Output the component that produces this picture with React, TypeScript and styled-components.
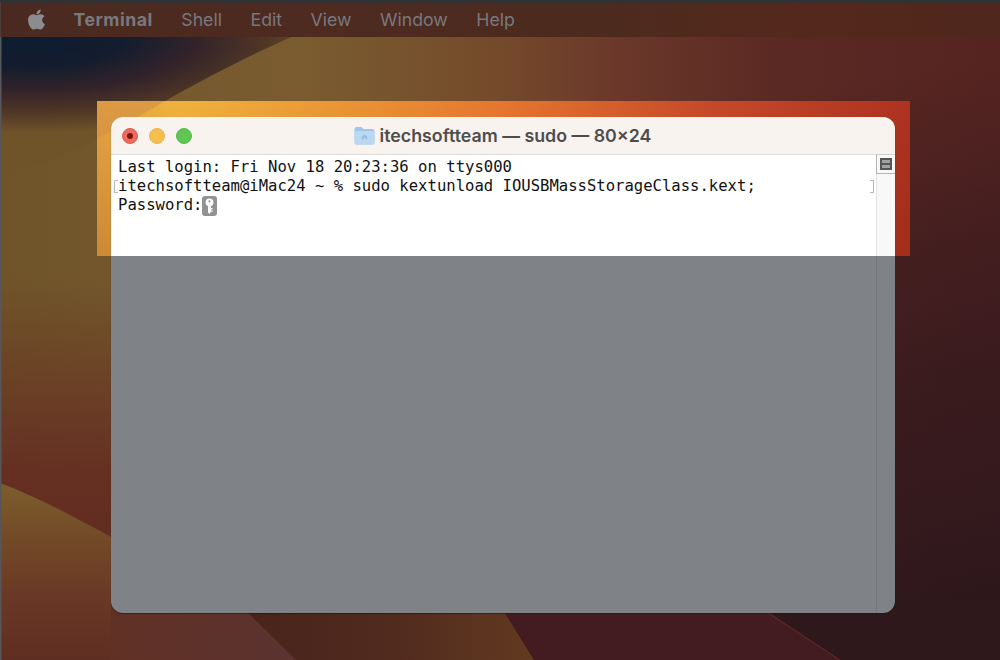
import React from "react";
import styled, { createGlobalStyle } from "styled-components";
import { FaApple } from "react-icons/fa";

const Global = createGlobalStyle`
  html, body { margin: 0; padding: 0; background: #2e1a1c; overflow: hidden; }
  * { box-sizing: border-box; }
`;

const Desktop = styled.div`
  position: relative;
  width: 1000px;
  height: 660px;
  overflow: hidden;
  display: flex;
  flex-direction: column;
  font-family: Inter, "Liberation Sans", sans-serif;
`;

const WallpaperSvg = styled.svg`
  position: absolute;
  inset: 0;
  display: block;
`;

const MenuBar = styled.header`
  position: relative;
  height: 37px;
  flex: none;
  display: flex;
  align-items: center;
  gap: 28.5px;
  padding-left: 27px;
  border-top: 3px solid #323133;
  border-left: 1px solid #4a3f3c;
  background: linear-gradient(90deg, #4a2a20 0%, #4e2a20 30%, #4d2a1e 60%, #55281c 80%, #4f271c 100%);
  color: #78797f;
  font-size: 17.7px;
  line-height: 1;
`;

const AppleMark = styled(FaApple)`
  width: 23px;
  height: 23px;
  color: #8b8c90;
  margin: -2px -3px 0 -3px;
`;

const MenuItem = styled.span<{ $strong?: boolean }>`
  font-weight: ${(p) => (p.$strong ? 700 : 400)};
  letter-spacing: ${(p) => (p.$strong ? "0.5px" : "0")};
`;

const Stage = styled.main`
  position: relative;
  flex: 1;
  padding: 80px 105px 47px 111px;
  display: flex;
`;

const TerminalWindow = styled.section`
  flex: 1;
  display: flex;
  flex-direction: column;
  border-radius: 12px;
  overflow: hidden;
  background: #7f8387;
  box-shadow: 0 1px 1px rgba(30, 20, 20, 0.55);
`;

const TitleBar = styled.div`
  height: 38px;
  flex: none;
  display: grid;
  grid-template-columns: 1fr auto 1fr;
  align-items: center;
  padding: 0 11px;
  background: #f8f3ef;
  border-bottom: 1px solid #dedbd8;
`;

const Lights = styled.div`
  display: flex;
  gap: 11px;
`;

const Light = styled.span<{ $color: string; $edge: string }>`
  width: 16px;
  height: 16px;
  border-radius: 50%;
  background: ${(p) => p.$color};
  border: 1px solid ${(p) => p.$edge};
  display: flex;
  align-items: center;
  justify-content: center;
`;

const CloseDot = styled.span`
  width: 6px;
  height: 6px;
  border-radius: 50%;
  background: #7c1610;
`;

const Title = styled.h1`
  margin: -1px 0 0 -1px;
  display: flex;
  align-items: center;
  gap: 5px;
  font-size: 17.8px;
  font-weight: 600;
  color: #4f4d4c;
  white-space: nowrap;
`;

const Body = styled.div`
  flex: 1;
  display: flex;
  min-height: 0;
`;

const Content = styled.div`
  flex: 1;
  min-width: 0;
`;

const Screen = styled.div`
  height: 101px;
  background: #fff;
  padding: 3px 2px 0 3px;
  font-family: "DejaVu Sans Mono", "Liberation Mono", monospace;
  font-size: 15.58px;
  line-height: 19px;
  color: #111;
`;

const Line = styled.div`
  display: flex;
  align-items: center;
  height: 19px;
  padding-left: 4px;
  white-space: pre;
`;

const MarkedLine = styled(Line)`
  padding-left: 0;
  justify-content: space-between;
`;

const Mark = styled.i<{ $side: "left" | "right" }>`
  display: block;
  width: 4px;
  height: 13px;
  flex: none;
  border: 1px solid #b9b9b9;
  border-${(p) => (p.$side === "left" ? "right" : "left")}: none;
`;

const MarkedText = styled.span`
  flex: 1;
`;

const Scroller = styled.aside`
  width: 19px;
  flex: none;
  display: flex;
  flex-direction: column;
`;

const ScrollerTrack = styled.div`
  height: 101px;
  flex: none;
  background: #f8f8f9;
  border-left: 1px solid #e4e4e4;
`;

const ScrollerRest = styled.div`
  flex: 1;
  border-left: 1px solid #74787c;
`;

const SplitButton = styled.div`
  height: 20px;
  margin: -1px 0 0 -1px;
  display: flex;
  align-items: center;
  justify-content: center;
  background: #f7f7f7;
  border: 1px solid #b5b5b5;
  border-top-color: #cfcfcf;
  border-right: none;
`;

const SplitGlyph = styled.span`
  width: 12px;
  height: 12px;
  background: linear-gradient(#555, #555) 0 3px / 100% 2px no-repeat, #a2a2a2;
  border: 2px solid #555;
`;

const KeyTile = styled.span`
  display: inline-flex;
  width: 15px;
  height: 20px;
  margin-top: 1px;
  border-radius: 3px;
  background: #929292;
  align-items: center;
  justify-content: center;
`;

const FolderIcon = () => (
  <svg width="21" height="19" viewBox="0 0 21 19" aria-hidden="true">
    <path d="M0.5 3 Q0.5 1 2.5 1 H7.5 L9.5 3 H18.5 Q20.5 3 20.5 5 V16.5 Q20.5 18.5 18.5 18.5 H2.5 Q0.5 18.5 0.5 16.5 Z" fill="#9ec6e8" />
    <path d="M0.5 5 H20.5 V16.5 Q20.5 18.5 18.5 18.5 H2.5 Q0.5 18.5 0.5 16.5 Z" fill="#b9d9f2" />
    <path d="M7.8 13.5 V10.8 L10.5 8.6 L13.2 10.8 V13.5 H11.4 V11.8 H9.6 V13.5 Z" fill="#97bfe0" />
  </svg>
);

const KeyIcon = () => (
  <svg width="9" height="17" viewBox="0 0 9 17" aria-hidden="true">
    <path
      fillRule="evenodd"
      d="M4.5 0.5 A4 4 0 0 1 6 8.2 V10 H7.6 V11.4 H6 V12.4 H7.6 V13.8 H6 L4.5 16 L3 14.6 V8.2 A4 4 0 0 1 4.5 0.5 Z M4.5 2.2 A1.1 1.1 0 1 0 4.5 4.4 A1.1 1.1 0 1 0 4.5 2.2 Z"
      fill="#fff"
    />
  </svg>
);

const Wallpaper = () => (
  <WallpaperSvg width="1000" height="660" viewBox="0 0 1000 660" aria-hidden="true">
    <defs>
      <linearGradient id="base" x1="0" x2="1" y1="0" y2="0">
        <stop offset="0" stopColor="#6f5429" />
        <stop offset="0.3" stopColor="#7a5c30" />
        <stop offset="0.5" stopColor="#744a2b" />
        <stop offset="0.62" stopColor="#6b372a" />
        <stop offset="0.78" stopColor="#5b2923" />
        <stop offset="1" stopColor="#552421" />
      </linearGradient>
      <linearGradient id="lowerRed" x1="0" x2="0" y1="0" y2="1">
        <stop offset="0.42" stopColor="#652f22" stopOpacity="0" />
        <stop offset="0.72" stopColor="#652f22" stopOpacity="1" />
        <stop offset="1" stopColor="#5c2a20" stopOpacity="1" />
      </linearGradient>
      <radialGradient id="plum" gradientUnits="userSpaceOnUse" cx="1000" cy="680" r="620">
        <stop offset="0" stopColor="#27141b" stopOpacity="0.97" />
        <stop offset="0.5" stopColor="#2c151c" stopOpacity="0.72" />
        <stop offset="1" stopColor="#2c151c" stopOpacity="0" />
      </radialGradient>
      <radialGradient id="navy" gradientUnits="userSpaceOnUse" cx="30" cy="37" r="300" gradientTransform="translate(0 25.2) scale(1 0.32)">
        <stop offset="0" stopColor="#0c1c30" />
        <stop offset="0.32" stopColor="#141d2e" />
        <stop offset="0.56" stopColor="#33232a" />
        <stop offset="0.78" stopColor="#4f3625" />
        <stop offset="1" stopColor="#6f5429" />
      </radialGradient>
      <linearGradient id="dune" x1="0" x2="0" y1="0" y2="1">
        <stop offset="0" stopColor="#7c5e2c" />
        <stop offset="0.3" stopColor="#734b28" />
        <stop offset="0.65" stopColor="#693826" />
        <stop offset="1" stopColor="#5f2e22" />
      </linearGradient>
      <linearGradient id="shoulder" x1="0" x2="1" y1="0" y2="0">
        <stop offset="0" stopColor="#603024" />
        <stop offset="1" stopColor="#5c3331" />
      </linearGradient>
      <linearGradient id="midBand" x1="0" x2="1" y1="0" y2="0">
        <stop offset="0" stopColor="#47231a" />
        <stop offset="0.55" stopColor="#522b1f" />
        <stop offset="1" stopColor="#623a20" />
      </linearGradient>
      <linearGradient id="spot" x1="0" x2="1" y1="0" y2="0">
        <stop offset="0" stopColor="#e2a442" />
        <stop offset="0.1" stopColor="#f0b23d" />
        <stop offset="0.3" stopColor="#ea9634" />
        <stop offset="0.5" stopColor="#e6762f" />
        <stop offset="0.75" stopColor="#c64a29" />
        <stop offset="1" stopColor="#ae3220" />
      </linearGradient>
      <linearGradient id="spotShade" x1="0" x2="0" y1="0" y2="1">
        <stop offset="0" stopColor="#6e1a08" stopOpacity="0" />
        <stop offset="1" stopColor="#6e1a08" stopOpacity="0.2" />
      </linearGradient>
    </defs>

    <rect width="1000" height="660" fill="url(#base)" />
    <rect width="1000" height="660" fill="url(#lowerRed)" />
    <rect width="1000" height="660" fill="url(#plum)" />
    <path d="M0 37 H291 C222 68 165 101 141 115 C100 140 60 160 0 175 Z" fill="url(#navy)" />

    <path d="M0 483 C40 498 80 520 111 537 V660 H0 Z" fill="url(#dune)" />
    <path d="M111 537 L111 660 H296 L235 600 Z" fill="url(#shoulder)" />

    <path d="M235 600 L296 660 H534 L497 600 Z" fill="url(#midBand)" />
    <path d="M497 600 L534 660 H840 L752 600 Z" fill="#431c21" />
    <path d="M752 600 L840 660 H1000 V600 Z" fill="#2e181c" />
    <path d="M768 613 L840 660" stroke="#672b2a" strokeWidth="1" fill="none" />

    <rect x="0" y="37" width="1.5" height="623" fill="#56565b" />

    <rect x="97" y="101" width="813" height="155" fill="url(#spot)" />
    <path d="M97 101 H165 L141 115 C125 124 110 132 97 138 Z" fill="#dd9a44" />
    <rect x="97" y="101" width="813" height="155" fill="url(#spotShade)" />
  </WallpaperSvg>
);

export default function App() {
  return (
    <Desktop>
      <Global />
      <Wallpaper />
      <MenuBar>
        <AppleMark />
        <MenuItem $strong>Terminal</MenuItem>
        <MenuItem>Shell</MenuItem>
        <MenuItem>Edit</MenuItem>
        <MenuItem>View</MenuItem>
        <MenuItem>Window</MenuItem>
        <MenuItem>Help</MenuItem>
      </MenuBar>
      <Stage>
        <TerminalWindow>
          <TitleBar>
            <Lights>
              <Light $color="#ec6a5e" $edge="#e05a4f">
                <CloseDot />
              </Light>
              <Light $color="#f5bf4f" $edge="#e9b048" />
              <Light $color="#61c554" $edge="#58b94c" />
            </Lights>
            <Title>
              <FolderIcon />
              itechsoftteam — sudo — 80×24
            </Title>
            <span />
          </TitleBar>
          <Body>
            <Content>
              <Screen>
                <Line>Last login: Fri Nov 18 20:23:36 on ttys000</Line>
                <MarkedLine>
                  <Mark $side="left" />
                  <MarkedText>itechsoftteam@iMac24 ~ % sudo kextunload IOUSBMassStorageClass.kext;</MarkedText>
                  <Mark $side="right" />
                </MarkedLine>
                <Line>
                  Password:
                  <KeyTile>
                    <KeyIcon />
                  </KeyTile>
                </Line>
              </Screen>
            </Content>
            <Scroller>
              <ScrollerTrack>
                <SplitButton>
                  <SplitGlyph />
                </SplitButton>
              </ScrollerTrack>
              <ScrollerRest />
            </Scroller>
          </Body>
        </TerminalWindow>
      </Stage>
    </Desktop>
  );
}
